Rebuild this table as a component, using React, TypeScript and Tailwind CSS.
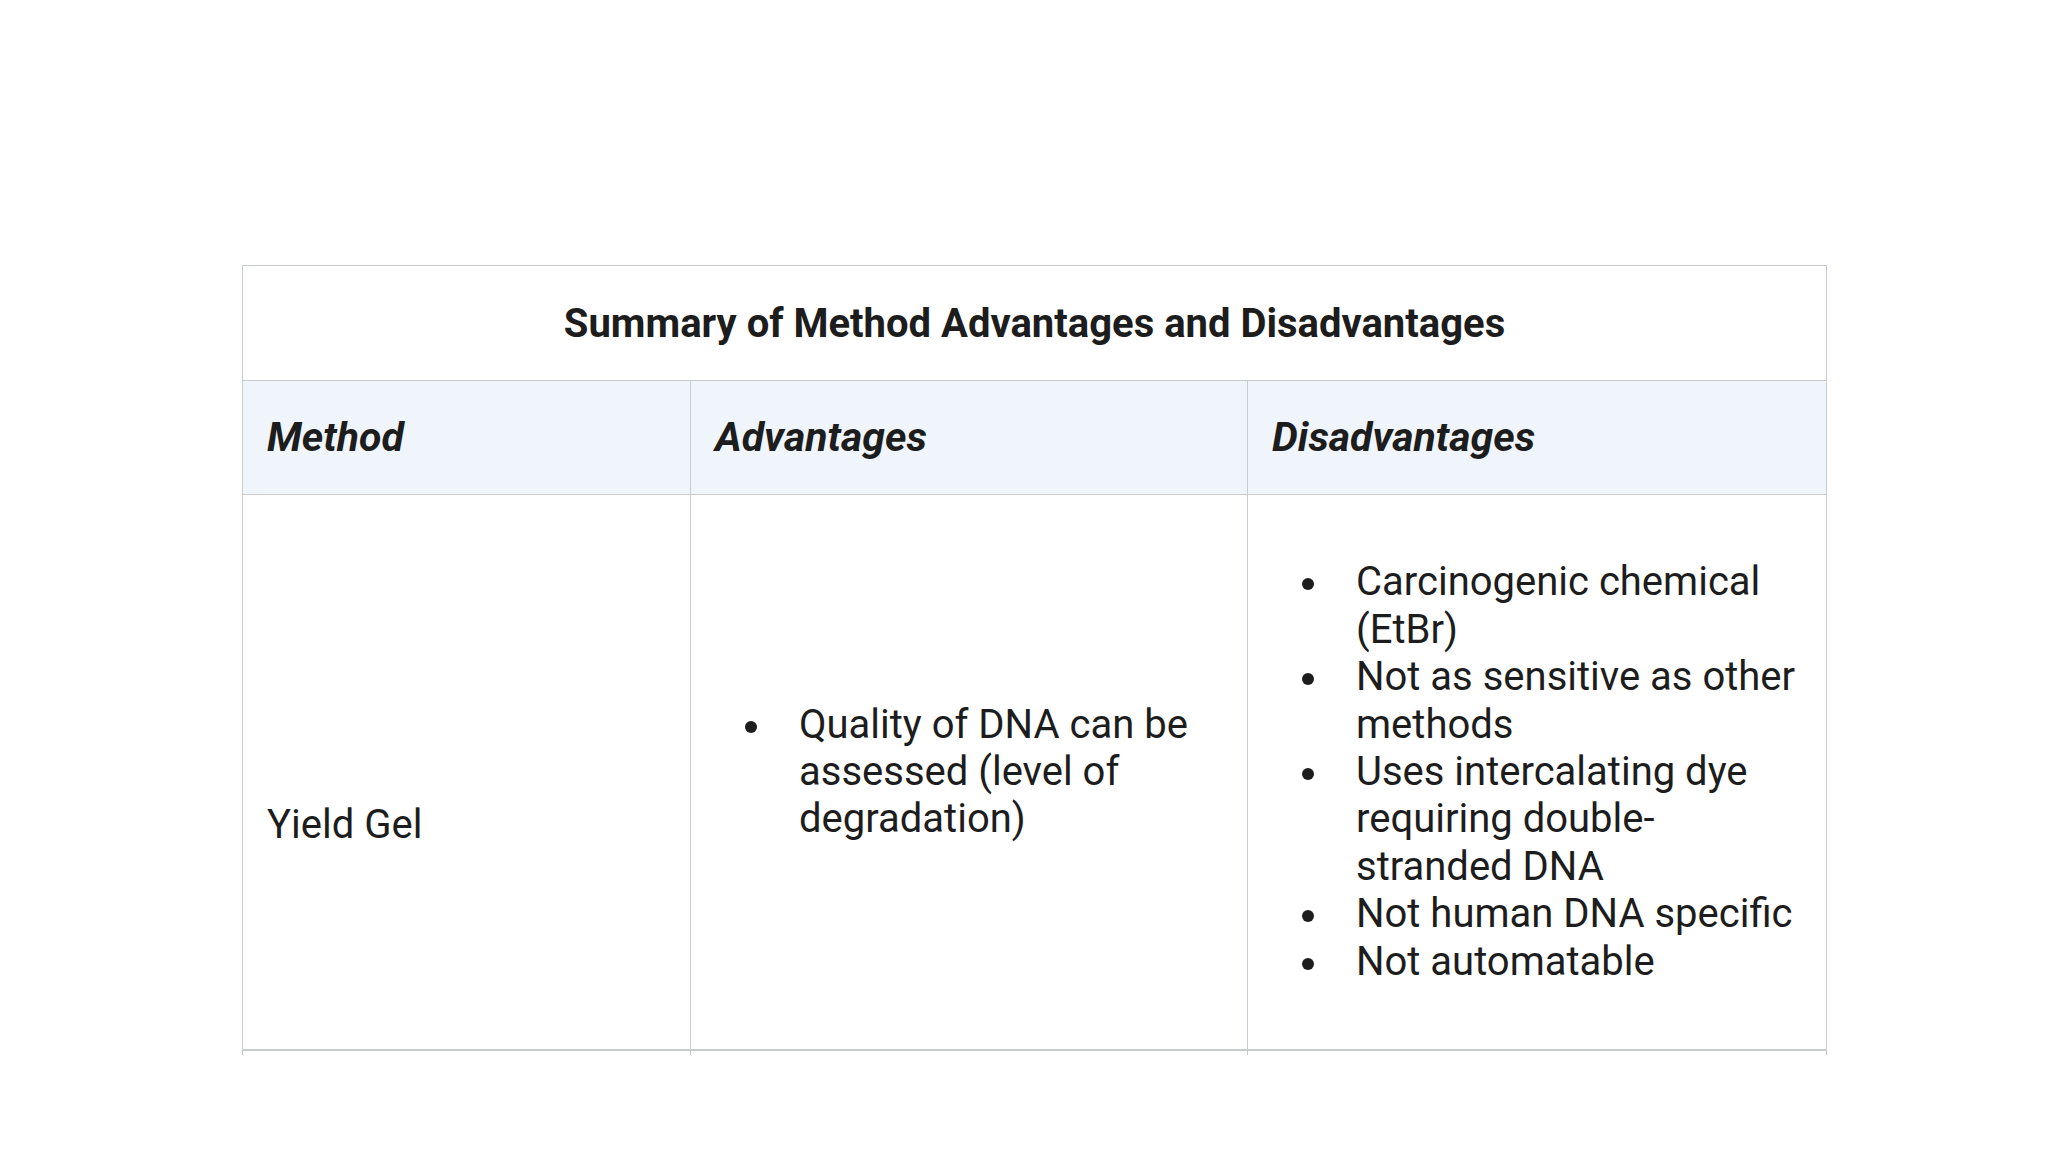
import React from "react";

const Bullet = ({ lines }: { lines: string[] }) => (
  <li className="flex">
    <span className="w-[84px] shrink-0 flex">
      <span className="ml-[30px] mt-[20px] w-[12px] h-[12px] rounded-full bg-[#1d1d1d]" />
    </span>
    <span className="whitespace-nowrap">
      {lines.map((l, i) => (
        <React.Fragment key={i}>
          {l}
          {i < lines.length - 1 && <br />}
        </React.Fragment>
      ))}
    </span>
  </li>
);

export default function App() {
  return (
    <div
      className="w-[2048px] h-[1152px] bg-white overflow-hidden text-[#1d1d1d]"
      style={{ fontFamily: 'Roboto, "Liberation Sans", sans-serif' }}
    >
      <div className="pt-[265px] pl-[242px]">
        <table className="border-collapse w-[1584px] table-fixed">
          <colgroup>
            <col className="w-[448px]" />
            <col className="w-[557px]" />
            <col className="w-[579px]" />
          </colgroup>
          <thead>
            <tr className="h-[115px]">
              <th
                colSpan={3}
                className="border border-[#c8ccd1] text-center font-bold text-[40px] leading-[47px] align-middle px-[24px]"
              >
                Summary of Method Advantages and Disadvantages
              </th>
            </tr>
            <tr className="h-[114px] bg-[#eff5fb]">
              <th className="border border-[#c8ccd1] text-left font-bold italic text-[41px] leading-[47.4px] px-[24px] align-middle">
                Method
              </th>
              <th className="border border-[#c8ccd1] text-left font-bold italic text-[41px] leading-[47.4px] px-[24px] align-middle">
                Advantages
              </th>
              <th className="border border-[#c8ccd1] text-left font-bold italic text-[41px] leading-[47.4px] px-[24px] align-middle">
                Disadvantages
              </th>
            </tr>
          </thead>
          <tbody className="text-[40px] leading-[47.4px]">
            <tr className="h-[555px]">
              <td className="border border-[#c8ccd1] border-b-2 px-[24px] align-middle">
                <div className="mt-[106px]">Yield Gel</div>
              </td>
              <td className="border border-[#c8ccd1] border-b-2 px-[24px] align-middle">
                <ul>
                  <Bullet lines={["Quality of DNA can be", "assessed (level of", "degradation)"]} />
                </ul>
              </td>
              <td className="border border-[#c8ccd1] border-b-2 px-[24px] align-middle">
                <ul>
                  <Bullet lines={["Carcinogenic chemical", "(EtBr)"]} />
                  <Bullet lines={["Not as sensitive as other", "methods"]} />
                  <Bullet lines={["Uses intercalating dye", "requiring double-", "stranded DNA"]} />
                  <Bullet lines={["Not human DNA specific"]} />
                  <Bullet lines={["Not automatable"]} />
                </ul>
              </td>
            </tr>
            <tr className="h-[5px]">
              <td className="border-x border-[#c8ccd1] p-0" />
              <td className="border-x border-[#c8ccd1] p-0" />
              <td className="border-x border-[#c8ccd1] p-0" />
            </tr>
          </tbody>
        </table>
      </div>
    </div>
  );
}
